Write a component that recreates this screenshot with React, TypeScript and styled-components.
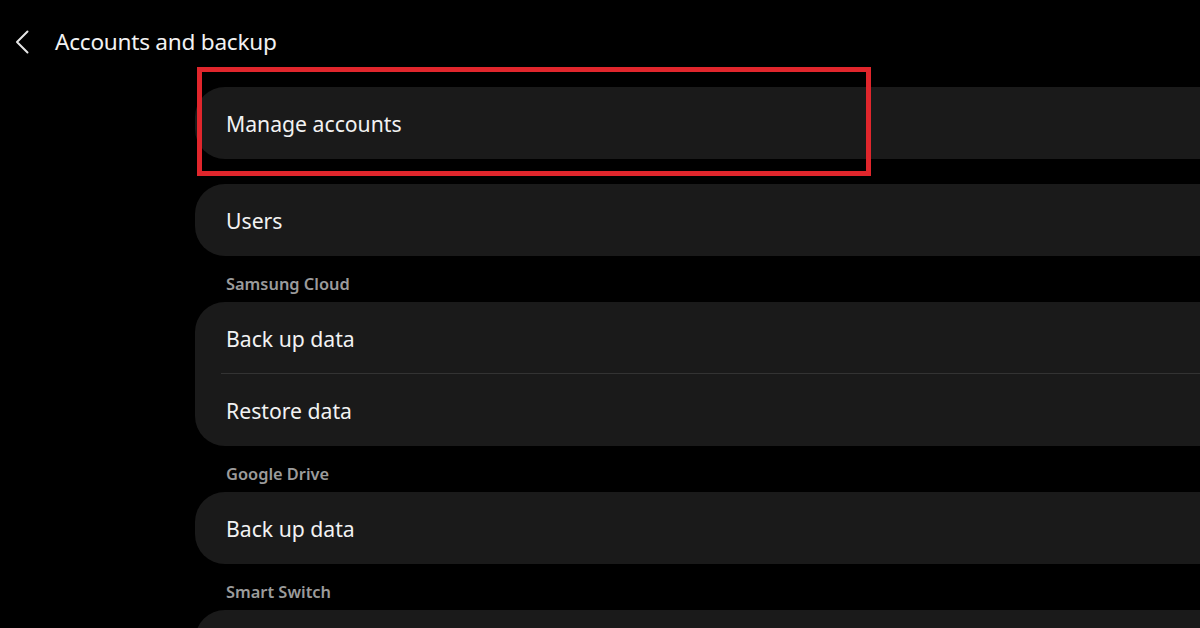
import React from "react";
import styled, { createGlobalStyle } from "styled-components";

const GlobalStyle = createGlobalStyle`
  html, body {
    margin: 0;
    padding: 0;
    background: #000;
    overflow: hidden;
  }
  body {
    font-family: "Noto Sans", "Open Sans", Roboto, sans-serif;
    color: #f2f2f2;
    -webkit-font-smoothing: antialiased;
  }
`;

const Screen = styled.div`
  width: 1200px;
  height: 628px;
  background: #000;
  overflow: hidden;
`;

const Header = styled.header`
  display: flex;
  align-items: center;
  height: 83px;
  padding-left: 12px;
  box-sizing: border-box;
`;

const BackButton = styled.button`
  display: flex;
  align-items: center;
  justify-content: center;
  width: 20px;
  height: 28px;
  padding: 0;
  margin-right: 23px;
  background: none;
  border: none;
  color: #e6e6e6;
  cursor: pointer;
`;

const Title = styled.h1`
  margin: 0;
  font-size: 22.6px;
  font-weight: 400;
  letter-spacing: -0.25px;
  color: #f2f2f2;
`;

const List = styled.main`
  display: flex;
  flex-direction: column;
  width: 1040px;
  margin-left: 195px;
  margin-top: 4px;
`;

const Card = styled.section<{ $gap?: number }>`
  position: relative;
  background: #1a1a1a;
  border-radius: 30px;
  margin-bottom: ${({ $gap }) => $gap ?? 0}px;
`;

const Row = styled.div<{ $divider?: boolean }>`
  position: relative;
  display: flex;
  align-items: center;
  height: 72px;
  padding-left: 31px;
  font-size: 21.2px;
  color: #f2f2f2;

  ${({ $divider }) =>
    $divider &&
    `
    &::after {
      content: "";
      position: absolute;
      left: 26px;
      right: 0;
      bottom: 0;
      height: 1px;
      background: #333;
    }
  `}
`;

const SectionLabel = styled.div`
  height: 20px;
  line-height: 20px;
  margin: 18px 0 8px;
  padding-left: 31px;
  font-size: 16.4px;
  font-weight: 600;
  color: #9b9b9b;
`;

// red highlight drawn over the first card
const Highlight = styled.div`
  position: absolute;
  left: 2px;
  top: -20px;
  width: 674px;
  height: 109px;
  box-sizing: border-box;
  border: 5px solid #e0262c;
  pointer-events: none;
`;

const ChevronLeft = () => (
  <svg width="14" height="24" viewBox="0 0 14 24" fill="none">
    <path d="M12.5 1.5 L2 12 L12.5 22.5" stroke="currentColor" strokeWidth="2" strokeLinecap="round" strokeLinejoin="round" />
  </svg>
);

type Section = {
  label?: string;
  rows: string[];
  gap?: number;
  highlight?: boolean;
};

// the last card runs past the bottom of the screen, so its row is left blank
const sections: Section[] = [
  { rows: ["Manage accounts"], gap: 25, highlight: true },
  { rows: ["Users"] },
  { label: "Samsung Cloud", rows: ["Back up data", "Restore data"] },
  { label: "Google Drive", rows: ["Back up data"] },
  { label: "Smart Switch", rows: [""] },
];

const App: React.FC = () => {
  return (
    <Screen>
      <GlobalStyle />
      <Header>
        <BackButton title="Back">
          <ChevronLeft />
        </BackButton>
        <Title>Accounts and backup</Title>
      </Header>

      <List>
        {sections.map((section, i) => (
          <React.Fragment key={i}>
            {section.label && <SectionLabel>{section.label}</SectionLabel>}
            <Card $gap={section.gap}>
              {section.rows.map((row, j) => (
                <Row key={j} $divider={j < section.rows.length - 1}>
                  {row}
                </Row>
              ))}
              {section.highlight && <Highlight />}
            </Card>
          </React.Fragment>
        ))}
      </List>
    </Screen>
  );
};

export default App;
